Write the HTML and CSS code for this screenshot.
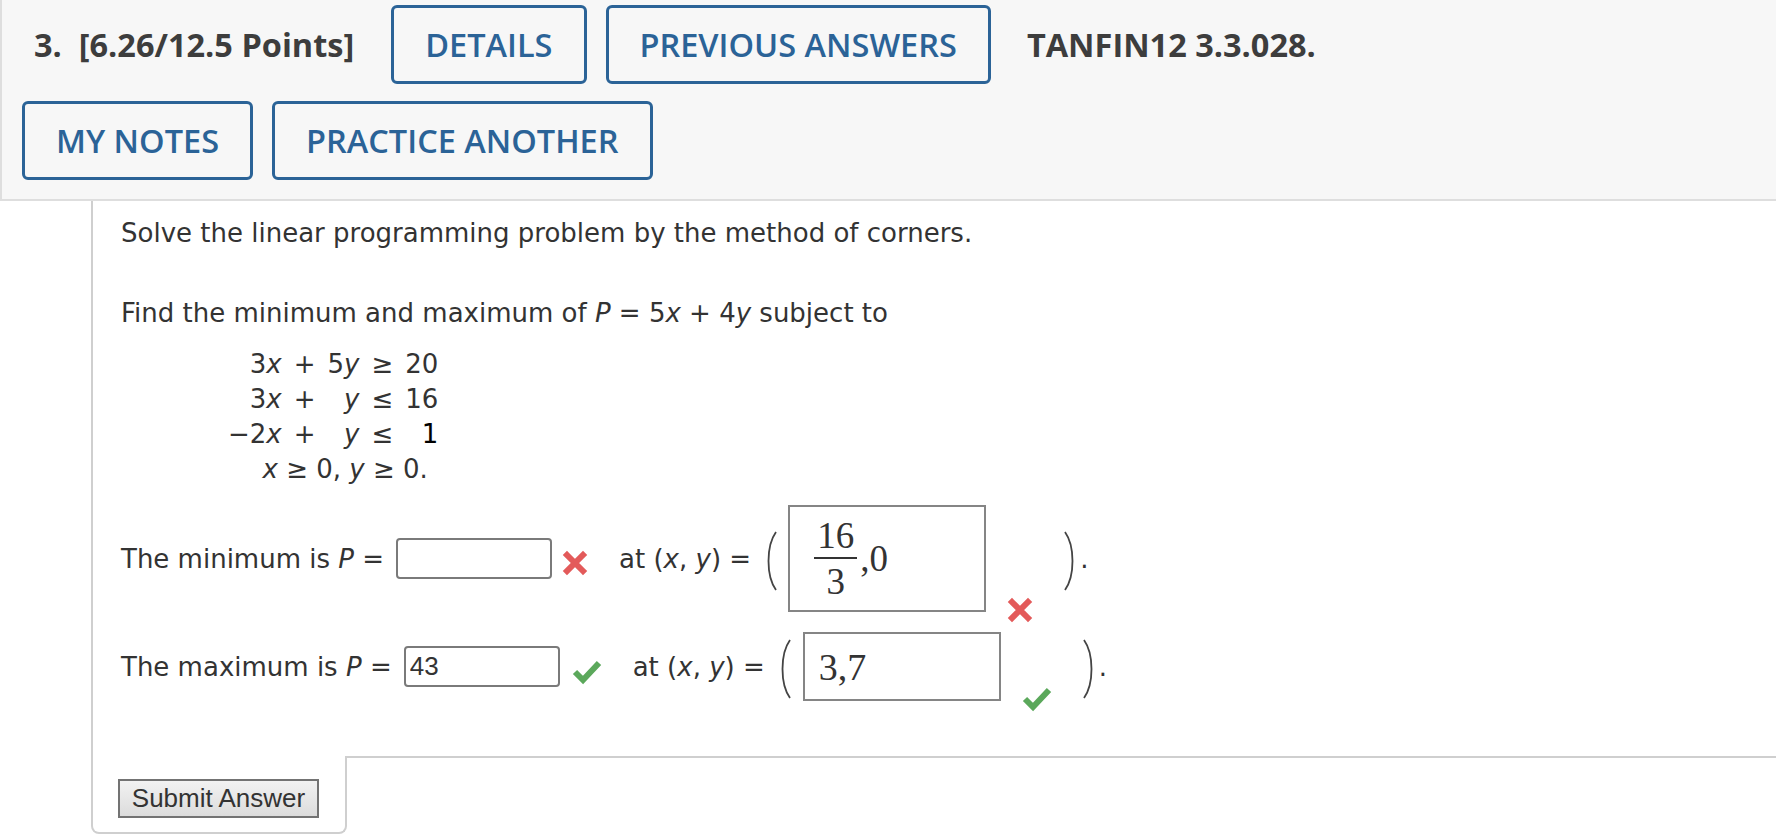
FILE: index.html
```html
<!DOCTYPE html>
<html lang="en">
<head>
  <meta charset="UTF-8" />
  <title>Question 3</title>
  <link rel="stylesheet" href="styles.css">
</head>
<body>
  <div class="q-header">
    <div class="q-row">
      <span class="q-title">3.&nbsp; [6.26/12.5 Points]</span>
      <button class="q-btn">Details</button>
      <button class="q-btn">Previous Answers</button>
      <span class="q-code">TANFIN12 3.3.028.</span>
    </div>
    <div class="q-row">
      <button class="q-btn">My Notes</button>
      <button class="q-btn">Practice Another</button>
    </div>
  </div>

  <div class="q-main">
    <div class="q-body">
      <p class="line first">Solve the linear programming problem by the method of corners.</p>
      <p class="line">Find the minimum and maximum of <i>P</i> = 5<i>x</i> + 4<i>y</i> subject to</p>

      <table class="constraints">
        <tr><td>3<i>x</i></td><td>+</td><td>5<i>y</i></td><td>&ge;</td><td>20</td></tr>
        <tr><td>3<i>x</i></td><td>+</td><td><i>y</i></td><td>&le;</td><td>16</td></tr>
        <tr><td>&minus;2<i>x</i></td><td>+</td><td><i>y</i></td><td>&le;</td><td class="one">1</td></tr>
        <tr><td colspan="5" class="nonneg"><i>x</i> &ge; 0, <i>y</i> &ge; 0.</td></tr>
      </table>

      <!-- minimum -->
      <div class="answer-row row-min">
        <span class="label">The minimum is <i>P</i> =</span>
        <input class="ans-input" type="text" value="">
        <svg class="mark cross" width="26" height="26" viewBox="0 0 26 26"><path d="M5 5 L21 21 M21 5 L5 21" stroke="#e35a5a" stroke-width="6" stroke-linecap="square"/></svg>
        <span class="label at">at (<i>x</i>, <i>y</i>) =</span>
        <svg class="paren" width="14" height="60" viewBox="0 0 14 60"><path d="M12 1 C2 15 2 45 12 59" fill="none" stroke="#444" stroke-width="1.8"/></svg>
        <div class="math-box tall">
          <span class="frac"><span class="num">16</span><span class="den">3</span></span><span>,0</span>
        </div>
        <svg class="mark low" width="26" height="26" viewBox="0 0 26 26"><path d="M5 5 L21 21 M21 5 L5 21" stroke="#e35a5a" stroke-width="6" stroke-linecap="square"/></svg>
        <svg class="paren close" width="14" height="60" viewBox="0 0 14 60"><path d="M2 1 C12 15 12 45 2 59" fill="none" stroke="#444" stroke-width="1.8"/></svg>
        <span class="dot">.</span>
      </div>

      <!-- maximum -->
      <div class="answer-row row-max">
        <span class="label">The maximum is <i>P</i> =</span>
        <input class="ans-input" type="text" value="43">
        <svg class="mark check" width="30" height="27" viewBox="0 0 30 27"><path d="M3 14 L11 22 L27 5" fill="none" stroke="#5ba85b" stroke-width="6"/></svg>
        <span class="label at">at (<i>x</i>, <i>y</i>) =</span>
        <svg class="paren" width="14" height="60" viewBox="0 0 14 60"><path d="M12 1 C2 15 2 45 12 59" fill="none" stroke="#444" stroke-width="1.8"/></svg>
        <div class="math-box short">
          <span>3,7</span>
        </div>
        <svg class="mark low" width="30" height="27" viewBox="0 0 30 27"><path d="M3 14 L11 22 L27 5" fill="none" stroke="#5ba85b" stroke-width="6"/></svg>
        <svg class="paren close" width="14" height="60" viewBox="0 0 14 60"><path d="M2 1 C12 15 12 45 2 59" fill="none" stroke="#444" stroke-width="1.8"/></svg>
        <span class="dot">.</span>
      </div>
    </div>

    <div class="q-footer">
      <div class="submit-tab">
        <button class="submit-btn">Submit Answer</button>
      </div>
      <div class="footer-rest"></div>
    </div>
  </div>
</body>
</html>
```

FILE: styles.css
```css
body {
  margin: 0;
  font-family: "DejaVu Sans", Verdana, sans-serif;
  color: #333;
  background-color: #fff;
  overflow: hidden;
}

/* header */
.q-header {
  background-color: #f7f7f7;
  border-left: 2px solid #dedede;
  border-bottom: 2px solid #dedede;
  padding: 5px 0 19px 20px;
  display: flex;
  flex-direction: column;
  gap: 17px;
  font-family: "Open Sans", sans-serif;
}
.q-row {
  display: flex;
  align-items: center;
  gap: 19px;
}
.q-title,
.q-code {
  font-size: 32.5px;
  font-weight: 700;
  color: #3d3d3d;
}
.q-title {
  margin: 0 18px 0 12px;
}
.q-code {
  margin-left: 17px;
}
.q-btn {
  height: 79px;
  box-sizing: border-box;
  padding: 0 31px;
  font-family: "Open Sans", sans-serif;
  font-size: 32.5px;
  font-weight: 600;
  text-transform: uppercase;
  color: #2b6397;
  background-color: transparent;
  border: 3px solid #2b6397;
  border-radius: 6px;
  cursor: pointer;
}

/* question body */
.q-main {
  margin-left: 91px;
}
.q-body {
  border-left: 2px solid #cfcfcf;
  padding: 17px 0 55px 28px;
  font-size: 26px;
}
.line {
  margin: 50px 0 0;
  line-height: 30px;
}
.line.first {
  margin-top: 0;
}

.constraints {
  margin: 18px 0 0 101px;
  border-collapse: collapse;
}
.constraints td {
  height: 35px;
  padding: 0 6px;
  text-align: right;
}
.constraints .one {
  color: #000;
}
.constraints .nonneg {
  text-align: center;
  padding-left: 30px;
}

.answer-row {
  display: flex;
  align-items: center;
  margin-top: 20px;
}
.answer-row > * {
  flex-shrink: 0;
}
.row-min {
  margin-top: 19px;
}
.ans-input {
  width: 156px;
  height: 41px;
  box-sizing: border-box;
  margin-left: 12px;
  padding: 0 4px;
  font-family: "Liberation Sans", Arial, sans-serif;
  font-size: 26px;
  color: #333;
  border: 2px solid #7a7a7a;
  border-radius: 4px;
}
.mark {
  margin-left: 10px;
}
.row-min .mark.cross {
  margin-top: 8px;
}
.row-max .mark.check {
  margin-left: 12px;
  margin-top: 10px;
}
.label.at {
  margin-left: 31px;
}
.paren {
  margin-left: 13px;
  margin-top: 5px;
}
.paren.close {
  margin-left: 30px;
}
.dot {
  margin-left: 3px;
}
.math-box {
  width: 198px;
  box-sizing: border-box;
  margin-left: 10px;
  border: 2px solid #858585;
  display: flex;
  align-items: center;
  font-family: "Liberation Serif", "DejaVu Serif", serif;
  font-size: 37px;
  color: #333;
}
.math-box.tall {
  height: 107px;
  padding-left: 24px;
}
.math-box.short {
  height: 69px;
  padding-left: 14px;
  font-size: 38px;
}
.row-max .math-box {
  margin-left: 11px;
}
.frac {
  display: inline-flex;
  flex-direction: column;
  align-items: center;
  line-height: 1;
  margin-right: 3px;
}
.frac .num {
  padding: 0 3px 3px;
  border-bottom: 2px solid #333;
}
.frac .den {
  padding-top: 4px;
}
.mark.low {
  align-self: flex-end;
  margin-bottom: -11px;
  margin-left: 21px;
}

/* footer */
.q-footer {
  display: flex;
}
.submit-tab {
  width: 256px;
  height: 78px;
  box-sizing: border-box;
  border: 2px solid #cfcfcf;
  border-top: none;
  border-radius: 0 0 8px 8px;
  padding: 23px 0 0 25px;
}
.footer-rest {
  flex: 1;
  border-top: 2px solid #cfcfcf;
}
.submit-btn {
  width: 201px;
  height: 39px;
  font-family: "Liberation Sans", Arial, sans-serif;
  font-size: 26px;
  color: #333;
  background: linear-gradient(#f2f2f2, #dcdcdc);
  border: 2px solid #737373;
  padding: 0;
  cursor: pointer;
}
```
